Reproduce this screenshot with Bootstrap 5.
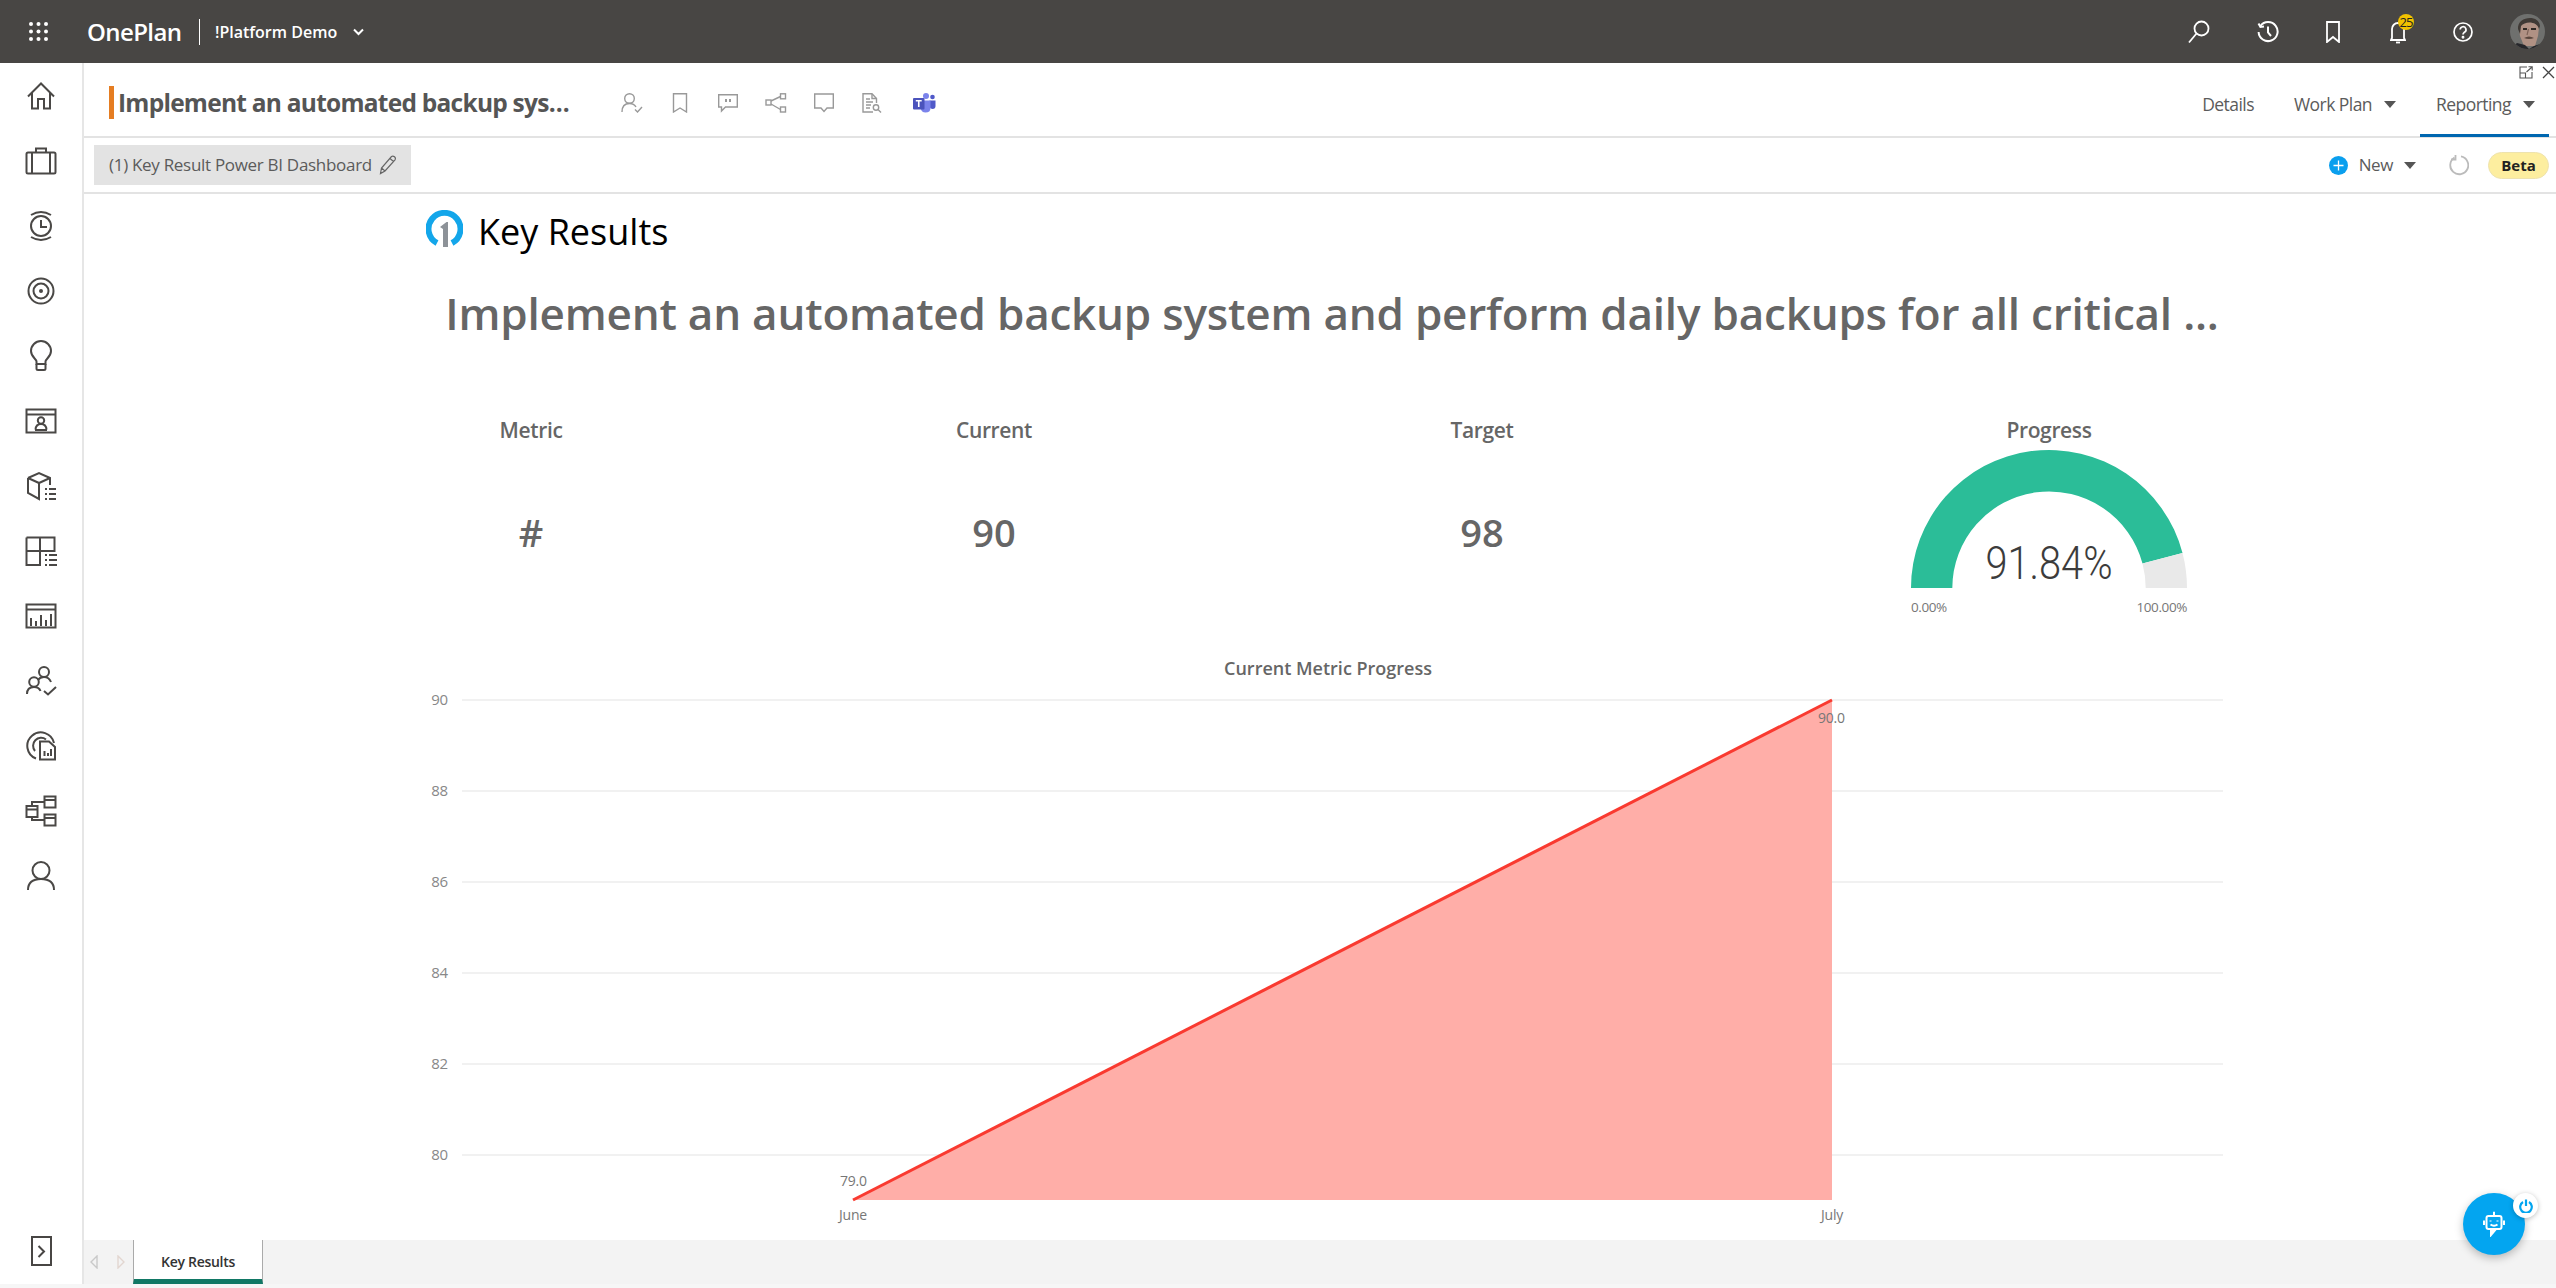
<!DOCTYPE html>
<html lang="en">
<head>
<meta charset="UTF-8">
<title>OnePlan - Key Results</title>
<link href="https://cdn.jsdelivr.net/npm/bootstrap@5.3.1/dist/css/bootstrap.min.css" rel="stylesheet">
<style>
    html, body { height: 100%; }
    body { font-family: "Open Sans", "Liberation Sans", sans-serif; color: #5b5b5b; background: #fff; overflow: hidden; }
    svg { display: block; flex: none; }

    .op-topbar { height: 63px; background: #484644; color: #fff; padding-left: 28px; flex: none; }
    .op-brand { font-size: 24px; font-weight: 600; letter-spacing: -.6px; margin-left: 38px; width: 112px; line-height: 1; }
    .op-divider { width: 1px; height: 26px; background: #fff; }
    .op-tenant { font-size: 16px; font-weight: 600; margin-left: 15px; white-space: nowrap; }
    .op-topicons { margin-left: auto; padding-right: 11px; }
    .op-topicon { width: 65px; display: flex; justify-content: center; position: relative; }
    .op-topicon:first-child { margin-right: 3.5px; }
    .op-count { position: absolute; left: 33px; top: -5px; width: 16px; height: 16px; border-radius: 50%; background: #f2c200; color: #222; font-size: 13px; line-height: 16px; text-align: center; letter-spacing: -1px; }
    .op-avatar { margin-left: 15px; }

    .op-body { min-height: 0; }
    .op-sidebar { width: 84px; border-right: 2px solid #e6e6e6; flex: none; }
    .op-sideitem { height: 65px; display: flex; align-items: center; justify-content: center; }
    .op-expand { margin-top: auto; margin-bottom: 18px; width: 21px; height: 30px; border: 2px solid #484644; display: flex; align-items: center; justify-content: center; }

    .op-header { height: 75px; border-bottom: 2px solid #e3e3e3; flex: none; padding: 6px 7px 0 25px; position: relative; }
    .op-title { width: 460px; height: 33px; border-left: 5px solid #e57d22; padding-left: 4px; font-size: 24.5px; font-weight: 700; line-height: 33px; color: #555; letter-spacing: -.75px; white-space: nowrap; }
    .op-actions { margin-left: 52px; gap: 26px; }
    .op-teams { margin-left: 4px; }
    .op-nav { margin-left: auto; align-self: stretch; margin-top: -6px; }
    .op-navitem { display: flex; align-items: center; gap: 12px; font-size: 17.5px; letter-spacing: -.55px; padding: 9px 24px 0 16px; margin-bottom: -1px; white-space: nowrap; }
    .op-navitem.op-active { border-bottom: 3px solid #0067b0; padding: 12px 14px 0 16px; }
    .op-caret { width: 0; height: 0; border-left: 6px solid transparent; border-right: 6px solid transparent; border-top: 7px solid #555; }
    .op-winbtns { position: absolute; top: 3px; right: 1px; gap: 9px; }

    .op-subbar { height: 56px; border-bottom: 2px solid #e3e3e3; flex: none; padding-left: 10px; padding-right: 7px; }
    .op-chip { width: 317px; height: 40px; background: #e3e3e3; padding-left: 15px; gap: 7px; font-size: 17px; letter-spacing: -.3px; white-space: nowrap; }
    .op-new { margin-left: auto; font-size: 17px; letter-spacing: -.4px; gap: 11px; }
    .op-refresh { margin-left: 33px; margin-right: 19px; }
    .op-beta { width: 61px; height: 27px; border-radius: 14px; background: #fdee9f; border: 1px solid #eee3ae; color: #222; font-size: 15px; font-weight: 700; line-height: 25px; text-align: center; }

    .op-report { padding-left: 342px; min-height: 0; overflow: hidden; position: relative; }
    .op-reporttop { padding-top: 16px; height: 53px; }
    .op-reportname { font-size: 36px; line-height: 37px; color: #000; margin-left: 15px; margin-top: 3px; white-space: nowrap; }
    .op-bigtitle { width: 1812px; margin-top: 36px; line-height: 60px; font-size: 44px; font-weight: 600; color: #666; text-align: center; white-space: nowrap; letter-spacing: -.2px; }
    .op-stats { display: grid; grid-template-columns: 210px 716px 260px 874px; margin-top: 72px; width: 2060px; }
    .op-stat { display: flex; flex-direction: column; align-items: center; }
    .op-statlabel { font-size: 21px; line-height: 30px; font-weight: 600; color: #666; letter-spacing: -.35px; }
    .op-statvalue { font-size: 38px; line-height: 60px; font-weight: 600; color: #666; margin-top: 57px; }
    .op-gauge { margin-top: -1px; }
    .op-charttitle { width: 1804px; margin-top: 40px; line-height: 24px; font-size: 18px; font-weight: 600; color: #666; text-align: center; }
    .op-gaugepct { font-family: Roboto, "Open Sans", sans-serif; font-weight: 300; font-size: 47px; fill: #3c3c3c; }
    .op-small { font-size: 14px; fill: #777; font-family: "Open Sans", sans-serif; letter-spacing: -.2px; }
    .op-gaugeend { font-size: 13.5px; letter-spacing: -.4px; }
    .op-axis { font-size: 15px; fill: #888; font-family: "Open Sans", sans-serif; letter-spacing: -.2px; }

    .op-tabs { height: 44px; background: #f3f3f3; flex: none; }
    .op-tabarrows { width: 49px; padding-left: 6px; gap: 19px; }
    .op-tab { width: 130px; height: 44px; background: #fff; border-left: 1px solid #aaa; border-right: 1px solid #aaa; border-bottom: 5px solid #117865; color: #333; font-size: 14px; font-weight: 600; line-height: 39px; text-align: center; letter-spacing: -.3px; padding-top: 2px; }
    .op-bottomband { height: 4px; background: #f6f6f6; flex: none; }

    .op-bot { position: absolute; left: 2463px; top: 1193px; width: 62px; height: 62px; border-radius: 50%; background: #03a5f0; box-shadow: 0 3px 8px rgba(0,0,0,.25); }
    .op-botpower { position: absolute; left: 50px; top: 0; width: 25px; height: 25px; border-radius: 50%; background: #fff; box-shadow: 0 1px 5px rgba(0,0,0,.25); }
</style>
</head>
<body class="d-flex flex-column">

<div class="op-topbar d-flex align-items-center">
    <svg width="21" height="21" viewBox="0 0 21 21" fill="#fff"><circle cx="3" cy="3" r="2"/><circle cx="10.5" cy="3" r="2"/><circle cx="18" cy="3" r="2"/><circle cx="3" cy="10.5" r="2"/><circle cx="10.5" cy="10.5" r="2"/><circle cx="18" cy="10.5" r="2"/><circle cx="3" cy="18" r="2"/><circle cx="10.5" cy="18" r="2"/><circle cx="18" cy="18" r="2"/></svg>
    <div class="op-brand">OnePlan</div>
    <div class="op-divider"></div>
    <div class="op-tenant">!Platform Demo</div>
    <svg class="ms-3" width="11" height="8" viewBox="0 0 11 8" fill="none" stroke="#fff" stroke-width="2"><path d="M1 1.5 L5.5 6 L10 1.5"/></svg>
    <div class="op-topicons d-flex align-items-center">
        <div class="op-topicon"><svg width="22" height="24" viewBox="0 0 22 24" fill="none" stroke="#fff" stroke-width="1.8"><circle cx="13.5" cy="8.5" r="7"/><path d="M8.5 13.5 L1 22.5"/></svg></div>
        <div class="op-topicon"><svg width="22" height="22" viewBox="0 0 22 22" fill="none" stroke="#fff" stroke-width="2"><path d="M3.4 5 A9.5 9.5 0 1 1 1.6 11"/><path d="M1.5 2.5 L3.4 6 L7 5.5"/><path d="M11 5.5 V11.5 L14 15"/></svg></div>
        <div class="op-topicon"><svg width="14" height="22" viewBox="0 0 14 22" fill="none" stroke="#fff" stroke-width="1.8"><path d="M1 1 H13 V21 L7 16 L1 21 Z"/></svg></div>
        <div class="op-topicon"><svg width="16" height="26" viewBox="0 0 16 26" fill="none" stroke="#fff" stroke-width="1.8"><path d="M1 21 H15 L14 19 V10 A6 6 0 0 0 2 10 V19 Z"/><path d="M6 23.5 H10"/></svg><span class="op-count">25</span></div>
        <div class="op-topicon"><svg width="20" height="20" viewBox="0 0 20 20" fill="none" stroke="#fff" stroke-width="1.7"><circle cx="10" cy="10" r="9"/><path d="M7.2 7.6 A2.9 2.9 0 1 1 11.4 10.2 C10.4 10.9 10 11.4 10 12.6"/><circle cx="10" cy="15.2" r=".6" fill="#fff"/></svg></div>
        <svg class="op-avatar" width="35" height="35" viewBox="0 0 35 35"><defs><clipPath id="avatarClip"><circle cx="17.5" cy="17.5" r="17.5"/></clipPath></defs><g clip-path="url(#avatarClip)"><rect width="35" height="35" fill="#6f706e"/><path d="M9 14 C9 4 28 2 29 13 L28 22 L25 32 L14 32 L10 22 Z" fill="#b09184"/><path d="M8 15 C7 2 29 0 30 12 L29 15 C27 7 15 7 11 12 L10 20 Z" fill="#3f3935"/><path d="M13 15 H17 M21 15 H26" stroke="#2f2824" stroke-width="1.8"/><path d="M18.5 15 L17 21" stroke="#7d6257" stroke-width="1.2"/><path d="M14 24 Q19 21 24 24 Q19 26 14 24" fill="#5a463d"/><path d="M0 35 L7 29 L15 31 L19 35 Z" fill="#26262a"/><path d="M35 35 L30 30 L24 32 L19 35 Z" fill="#26262a"/></g></svg>
    </div>
</div>

<div class="op-body d-flex flex-grow-1">
    <div class="op-sidebar d-flex flex-column">
        <div class="op-sideitem"><svg width="32" height="32" viewBox="0 0 32 32" fill="none" stroke="#4a4846" stroke-width="2"><path d="M3 16.5 L16 3.5 L29 16.5"/><path d="M7 13 V28.5 H13 V19 H19 V28.5 H25 V13"/></svg></div>
        <div class="op-sideitem"><svg width="32" height="32" viewBox="0 0 32 32" fill="none" stroke="#4a4846" stroke-width="2"><rect x="1.5" y="7.5" width="29" height="21" rx="1.5"/><path d="M11 7.5 V3.5 H21 V7.5"/><path d="M7 7.5 V28.5 M25 7.5 V28.5"/></svg></div>
        <div class="op-sideitem"><svg width="32" height="32" viewBox="0 0 32 32" fill="none" stroke="#4a4846" stroke-width="2"><circle cx="16" cy="16" r="10"/><path d="M16 10 V17 H22"/><path d="M6 5 Q16 -1 26 5"/><path d="M6 27 Q16 33 26 27"/></svg></div>
        <div class="op-sideitem"><svg width="32" height="32" viewBox="0 0 32 32" fill="none" stroke="#4a4846" stroke-width="2"><circle cx="16" cy="16" r="12.5"/><circle cx="16" cy="16" r="7.5"/><circle cx="16" cy="16" r="2" fill="#4a4846" stroke="none"/></svg></div>
        <div class="op-sideitem"><svg width="32" height="32" viewBox="0 0 32 32" fill="none" stroke="#4a4846" stroke-width="2"><path d="M11.5 24 V21.5 C11.5 19 6 17 6 11 A10 10 0 0 1 26 11 C26 17 20.5 19 20.5 21.5 V24 Z"/><path d="M11.5 24 V28.5 Q11.5 30 13 30 H19 Q20.5 30 20.5 28.5 V24"/></svg></div>
        <div class="op-sideitem"><svg width="32" height="32" viewBox="0 0 32 32" fill="none" stroke="#4a4846" stroke-width="2"><rect x="1.5" y="4.5" width="29" height="23"/><path d="M1.5 9.5 H30.5"/><circle cx="16" cy="15.5" r="3.2"/><path d="M10.5 24.5 Q11 19 16 19 Q21 19 21.5 24.5 M10 25 H22"/></svg></div>
        <div class="op-sideitem"><svg width="32" height="32" viewBox="0 0 32 32" fill="none" stroke="#4a4846" stroke-width="2"><path d="M3 8 L14 3 L25 8 V15"/><path d="M3 8 V23 L14 29 V13 L3 8"/><path d="M14 13 L25 8"/><path d="M20 19 H31 M20 24 H31 M20 29 H31" stroke-dasharray="2 2 10"/></svg></div>
        <div class="op-sideitem"><svg width="32" height="32" viewBox="0 0 32 32" fill="none" stroke="#4a4846" stroke-width="2"><path d="M1.5 2.5 H29.5 V17 M1.5 2.5 V30 H15 V2.5 M1.5 16 H29.5"/><path d="M20 20 H32 M20 25 H32 M20 30 H32" stroke-dasharray="2 2 10"/></svg></div>
        <div class="op-sideitem"><svg width="32" height="32" viewBox="0 0 32 32" fill="none" stroke="#4a4846" stroke-width="2"><rect x="1.5" y="4.5" width="29" height="23"/><path d="M1.5 9.5 H30.5"/><path d="M6 26 V18 M11 26 V21 M16 26 V15 M21 26 V20 M26 26 V14"/></svg></div>
        <div class="op-sideitem"><svg width="32" height="32" viewBox="0 0 32 32" fill="none" stroke="#4a4846" stroke-width="2"><circle cx="19" cy="7" r="5"/><circle cx="9" cy="17" r="4.8"/><path d="M2 29 Q2 22 9 22 Q14 22 15.5 26"/><path d="M13 15 Q15 12 19 12 Q24 12 26 17"/><path d="M19 26 L23 29.5 L31 22"/></svg></div>
        <div class="op-sideitem"><svg width="32" height="32" viewBox="0 0 32 32" fill="none" stroke="#4a4846" stroke-width="2"><path d="M11 28.5 A13.5 13.5 0 1 1 29 13"/><path d="M10 21 A8 8 0 0 1 21 9.5"/><path d="M15 11.5 H24 L30 17 V29.5 H15 Z"/><path d="M19.5 26 V21 M23 26 V23 M26 26 V19"/></svg></div>
        <div class="op-sideitem"><svg width="32" height="32" viewBox="0 0 32 32" fill="none" stroke="#4a4846" stroke-width="2"><rect x="1.5" y="11" width="11" height="11"/><path d="M1.5 14.5 H12.5"/><rect x="19.5" y="1.5" width="11" height="11"/><path d="M19.5 5 H30.5"/><rect x="19.5" y="19.5" width="11" height="11"/><path d="M19.5 23 H30.5"/><path d="M7 11 V7 H19.5 M7 22 V25 H19.5"/></svg></div>
        <div class="op-sideitem"><svg width="32" height="32" viewBox="0 0 32 32" fill="none" stroke="#4a4846" stroke-width="2"><circle cx="16" cy="10.5" r="8.5"/><path d="M3 30 Q3 19 16 19 Q29 19 29 30"/></svg></div>
        <div class="op-expand mx-auto"><svg width="9" height="13" viewBox="0 0 9 13" fill="none" stroke="#484644" stroke-width="2"><path d="M1.5 1 L7 6.5 L1.5 12"/></svg></div>
    </div>

    <div class="flex-grow-1 d-flex flex-column" style="min-width:0">
        <div class="op-header d-flex align-items-center">
            <div class="op-title">Implement an automated backup sys…</div>
            <div class="op-actions d-flex align-items-center">
                <svg width="22" height="20" viewBox="0 0 22 20" fill="none" stroke="#999" stroke-width="1.4"><circle cx="8.5" cy="5.5" r="4.8"/><path d="M1 19 Q1 10.5 8.5 10.5 Q13 10.5 15 14"/><path d="M14 16.5 L16.5 19 L21 14"/></svg>
                <svg width="22" height="20" viewBox="0 0 22 20" fill="none" stroke="#999" stroke-width="1.4"><path d="M4.5 .7 H17.5 V19 L11 15 L4.5 19 Z"/></svg>
                <svg width="22" height="20" viewBox="0 0 22 20" fill="#999" stroke="none"><path d="M1.7 1.7 H20.3 V14 H8.5 L4.5 18 V14 H1.7 Z" fill="none" stroke="#999" stroke-width="1.4"/><rect x="8" y="6" width="2" height="3"/><rect x="12" y="6" width="2" height="3"/></svg>
                <svg width="22" height="20" viewBox="0 0 22 20" fill="none" stroke="#999" stroke-width="1.4"><rect x="1" y="7" width="5" height="5"/><rect x="15.5" y=".8" width="5" height="5"/><rect x="15.5" y="14" width="5" height="5"/><path d="M6 8 L15.5 3.5 M6 11 L15.5 16.5"/></svg>
                <svg width="22" height="20" viewBox="0 0 22 20" fill="none" stroke="#999" stroke-width="1.4"><path d="M1.7 1 H20.3 V15 H14 L11 18.5 L8 15 H1.7 Z"/></svg>
                <svg width="22" height="20" viewBox="0 0 22 20" fill="none" stroke="#999" stroke-width="1.4"><path d="M15.5 10 V5.5 L11 .8 H2 V19 H12"/><path d="M11 1 V5.5 H15.5"/><path d="M5 6 H9 M5 9 H12 M5 12 H10 M5 15 H9"/><circle cx="15" cy="14.5" r="2.7"/><path d="M17 16.5 L20 19.5"/></svg>
                <svg class="op-teams" width="23" height="20" viewBox="0 0 23 20"><circle cx="13" cy="3" r="3" fill="#7b83eb"/><circle cx="19.5" cy="4" r="2.3" fill="#5059c9"/><path d="M16.5 7.5 H22.5 V13 Q22.5 16 19.5 16 Q17.5 16 16.5 14 Z" fill="#5059c9"/><path d="M7.5 7.5 H17.5 V15 Q17.5 19.5 12.5 19.5 Q8.5 19.5 7.5 15 Z" fill="#7b83eb"/><rect x="0" y="5" width="11.5" height="11.5" rx="1" fill="#4b53bc"/><path d="M2.8 7.8 H8.7 M5.75 7.8 V14" stroke="#fff" stroke-width="1.6" fill="none"/></svg>
            </div>
            <div class="op-nav d-flex">
                <div class="op-navitem">Details</div>
                <div class="op-navitem">Work Plan <span class="op-caret"></span></div>
                <div class="op-navitem op-active">Reporting <span class="op-caret"></span></div>
            </div>
            <div class="op-winbtns d-flex align-items-center">
                <svg width="14" height="13" viewBox="0 0 14 13" fill="none" stroke="#555" stroke-width="1.1"><path d="M8 1 H1 V12 H13 V6"/><path d="M1 7 H6.5 V12"/><path d="M7.5 6 L13 1 M9.5 .8 H13.2 V4.5"/></svg>
                <svg width="13" height="13" viewBox="0 0 13 13" fill="none" stroke="#444" stroke-width="1.3"><path d="M1 1 L12 12 M12 1 L1 12"/></svg>
            </div>
        </div>

        <div class="op-subbar d-flex align-items-center">
            <div class="op-chip d-flex align-items-center">(1) Key Result Power BI Dashboard
                <svg width="18" height="20" viewBox="0 0 18 20" fill="none" stroke="#666" stroke-width="1.2"><path d="M1.5 18.5 L2.5 13 L12.5 1.5 Q14 .5 15.5 1.8 Q17 3.2 16 4.8 L6 16 Z M2.5 13 L6 16 M11 3.5 L14.5 6.5"/></svg>
            </div>
            <div class="op-new d-flex align-items-center">
                <svg width="19" height="19" viewBox="0 0 19 19"><circle cx="9.5" cy="9.5" r="9.5" fill="#0a9fee"/><path d="M9.5 4.5 V14.5 M4.5 9.5 H14.5" stroke="#fff" stroke-width="1.3"/></svg>
                New <span class="op-caret"></span>
            </div>
            <svg class="op-refresh" width="20" height="22" viewBox="0 0 20 22" fill="none" stroke="#bbb" stroke-width="1.8"><path d="M5.5 3.6 A9 9 0 1 0 12 2.4"/><path d="M6.5 1 V5.5 H2"/></svg>
            <div class="op-beta">Beta</div>
        </div>

        <div class="op-report flex-grow-1">
            <div class="op-reporttop d-flex align-items-start">
                <svg width="37" height="37" viewBox="0 0 37 37"><path d="M11 33 A16 16 0 1 1 26 33" fill="none" stroke="#13a6ea" stroke-width="6"/><path d="M14 17 L20.5 12 H22 V37 H17 V19 Z" fill="#8d9298"/></svg>
                <div class="op-reportname">Key Results</div>
            </div>
            <div class="op-bigtitle">Implement an automated backup system and perform daily backups for all critical ...</div>
            <div class="op-stats">
                <div class="op-stat"><div class="op-statlabel">Metric</div><div class="op-statvalue">#</div></div>
                <div class="op-stat"><div class="op-statlabel">Current</div><div class="op-statvalue">90</div></div>
                <div class="op-stat"><div class="op-statlabel">Target</div><div class="op-statvalue">98</div></div>
                <div class="op-stat">
                    <div class="op-statlabel">Progress</div>
                    <svg class="op-gauge" width="300" height="172" viewBox="0 0 300 172">
                        <path d="M12 144 A138 138 0 0 1 283.5 109 L243.5 119.5 A96.7 96.7 0 0 0 53.3 144 Z" fill="#2bbd98"/>
                        <path d="M283.5 109 A138 138 0 0 1 288 144 L246.7 144 A96.7 96.7 0 0 0 243.5 119.5 Z" fill="#e9e9e9"/>
                        <text class="op-gaugepct" x="150" y="135" text-anchor="middle" textLength="127" lengthAdjust="spacingAndGlyphs">91.84%</text>
                        <text class="op-small op-gaugeend" x="12" y="168">0.00%</text>
                        <text class="op-small op-gaugeend" x="288" y="168" text-anchor="end">100.00%</text>
                    </svg>
                </div>
            </div>
            <div class="op-charttitle">Current Metric Progress</div>
            <svg width="1820" height="560" viewBox="0 0 1820 560">
                <g stroke="#ececec" stroke-width="1.5">
                    <path d="M36 20 H1797"/><path d="M36 111 H1797"/><path d="M36 202 H1797"/><path d="M36 293 H1797"/><path d="M36 384 H1797"/><path d="M36 475 H1797"/>
                </g>
                <g class="op-axis" text-anchor="end">
                    <text x="22" y="25">90</text><text x="22" y="116">88</text><text x="22" y="207">86</text><text x="22" y="298">84</text><text x="22" y="389">82</text><text x="22" y="480">80</text>
                </g>
                <path d="M427 520 L1406 20 V520 Z" fill="#ffaea8"/>
                <path d="M427 520 L1406 20" stroke="#f93a30" stroke-width="3" fill="none"/>
                <g class="op-small">
                    <text x="414" y="506">79.0</text>
                    <text x="1392" y="43">90.0</text>
                    <text x="427" y="540" text-anchor="middle">June</text>
                    <text x="1406" y="540" text-anchor="middle">July</text>
                </g>
            </svg>
        </div>

        <div class="op-tabs d-flex">
            <div class="op-tabarrows d-flex align-items-center">
                <svg width="8" height="14" viewBox="0 0 8 14" fill="none" stroke="#c9c9c9" stroke-width="1.4"><path d="M7 1 L1 7 L7 13 Z"/></svg>
                <svg width="8" height="14" viewBox="0 0 8 14" fill="none" stroke="#e2d6d0" stroke-width="1.4"><path d="M1 1 L7 7 L1 13 Z"/></svg>
            </div>
            <div class="op-tab">Key Results</div>
        </div>
    </div>
</div>
<div class="op-bottomband"></div>

<div class="op-bot d-flex align-items-center justify-content-center">
    <svg width="22" height="26" viewBox="0 0 22 26" fill="none" stroke="#fff" stroke-width="2"><path d="M11 .8 V5"/><rect x="3.5" y="5" width="15" height="13" rx="2"/><path d="M1 9.5 V14 M21 9.5 V14"/><path d="M7.5 9.5 V10.5 M14.5 9.5 V10.5"/><path d="M7.5 13.5 Q11 16 14.5 13.5"/><path d="M8 18 V24 L13 18" fill="#fff"/></svg>
    <div class="op-botpower d-flex align-items-center justify-content-center">
        <svg width="14" height="14" viewBox="0 0 14 14" fill="none" stroke="#03a5f0" stroke-width="2.2"><path d="M4 3 A5.8 5.8 0 1 0 10 3"/><path d="M7 .5 V7"/></svg>
    </div>
</div>

<script src="https://cdn.jsdelivr.net/npm/bootstrap@5.3.1/dist/js/bootstrap.bundle.min.js"></script>
</body>
</html>
